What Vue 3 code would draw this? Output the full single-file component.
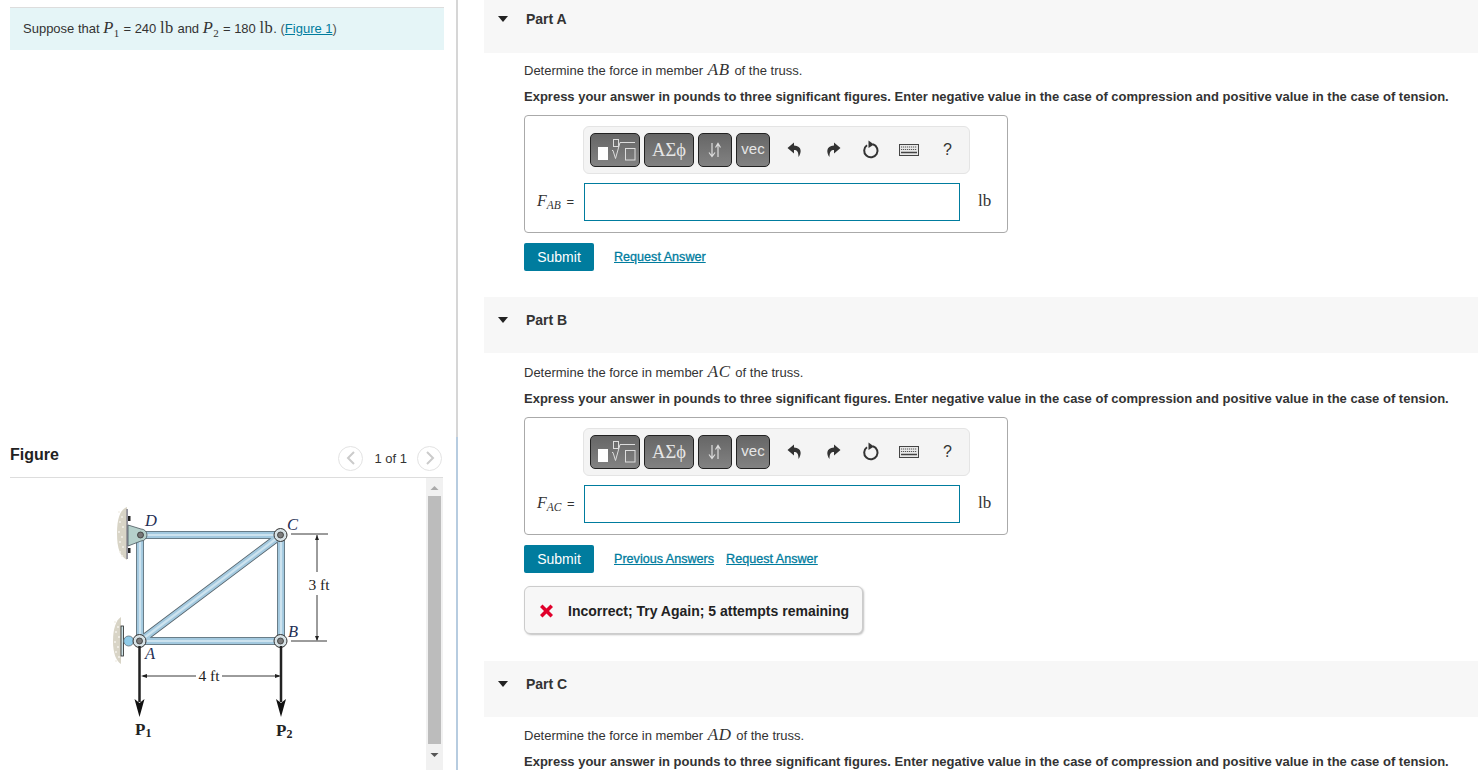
<script setup>
const parts = [
  { id: 'A', cls: 'part-a', member: 'AB', sub: 'AB', links: ['Request Answer'], incorrect: false, open: true },
  { id: 'B', cls: 'part-b', member: 'AC', sub: 'AC', links: ['Previous Answers', 'Request Answer'], incorrect: true, open: true },
  { id: 'C', cls: 'part-c', member: 'AD', sub: 'AD', links: [], incorrect: false, open: false },
]
const wallDots = [
  [119,512],[122,517],[120,522],[123,527],[119,532],[122,537],[120,542],[123,547],[120,552],[122,556],
]
const wallDots2 = [
  [115,622],[118,627],[116,632],[119,637],[115,642],[118,647],[116,652],[119,657],[116,661],
]
const joints = [[280.5,535],[280.5,641],[139.5,641]]
const bars = 'M140 535V641M141 535H281M281 535V641M140 641H281M140 641 281 535'
</script>

<template>
  <div class="page">
    <div class="left">
      <div class="left-top">
        <div class="banner">
          Suppose that <span class="math"><i>P</i><sub>1</sub></span> = 240 <span class="math">lb</span> and
          <span class="math"><i>P</i><sub>2</sub></span> = 180 <span class="math">lb</span>.
          <span class="figlink">(<a>Figure 1</a>)</span>
        </div>
      </div>
      <div class="left-bottom">
        <div class="fig-head">
          <h2>Figure</h2>
          <div class="pager">
            <span class="circle">
              <svg width="10" height="14" viewBox="0 0 10 14"><path d="M8 1 2 7l6 6" fill="none" stroke="#cbcbcb" stroke-width="2"/></svg>
            </span>
            <span class="count">1 of 1</span>
            <span class="circle">
              <svg width="10" height="14" viewBox="0 0 10 14"><path d="m2 1 6 6-6 6" fill="none" stroke="#cbcbcb" stroke-width="2"/></svg>
            </span>
          </div>
        </div>
        <div class="fig-body">
          <svg class="truss" width="416" height="292" viewBox="10 478 416 292">
            <path d="M127 507c-6 2-10 10-10 26s3 23 10 27z" fill="#d8d4c6"/>
            <circle v-for="d in wallDots" :key="d[1]" :cx="d[0]" :cy="d[1]" r="1" fill="#f3f1ea"/>
            <path d="M121 617c-5 3-8 12-8 24s3 20 8 23z" fill="#d8d4c6"/>
            <circle v-for="d in wallDots2" :key="d[1]" :cx="d[0]" :cy="d[1]" r="1" fill="#f3f1ea"/>
            <rect x="126.500" y="509" width="1.200" height="50" fill="#667"/>
            <rect x="128" y="516" width="2.500" height="5" fill="#222"/>
            <rect x="128" y="548" width="2.500" height="5" fill="#222"/>
            <rect x="121" y="626" width="2.500" height="30" fill="#cfe4e8" stroke="#222" stroke-width="0.8"/>
            <g fill="none">
              <path :d="bars" stroke="#56636b" stroke-width="8"/>
              <path :d="bars" stroke="#a3c9df" stroke-width="6.500"/>
              <path :d="bars" stroke="#cde3ef" stroke-width="2.200"/>
            </g>
            <path d="M128 525 141 529a6 6 0 0 1 0 12L128 546z" fill="#b5d0cb" stroke="#47545c" stroke-width="0.8"/>
            <circle cx="140.500" cy="535" r="3" fill="#777" stroke="#333" stroke-width="0.8"/>
            <circle cx="128.700" cy="641" r="5" fill="#8fcbe8" stroke="#5f6d75" stroke-width="0.8"/>
            <g v-for="j in joints" :key="j[0] + '-' + j[1]">
              <circle :cx="j[0]" :cy="j[1]" r="6.500" fill="#d7e2e6" stroke="#333" stroke-width="1"/>
              <circle :cx="j[0]" :cy="j[1]" r="3" fill="#7c7c7c" stroke="#333" stroke-width="0.8"/>
            </g>
            <path d="M139.500 646V702M281 646V702" stroke="#222" stroke-width="2.500"/>
            <path d="M134.500 699 139.500 703 144.500 699 139.500 717zM276 699 281 703 286 699 281 717z" fill="#111"/>
            <g stroke="#222" stroke-width="0.9" fill="none">
              <path d="M291 534H328M291 641H327M317 535V572M317 595V640M143 676H196M222 676H279"/>
            </g>
            <path d="M317 535l-2 5h4zM317 641l-2-5h4zM141 676l6-2v4zM281 676l-6-2v4z" fill="#222"/>
            <g class="dim">
              <text x="319" y="590" text-anchor="middle">3 ft</text>
              <text x="209" y="681" text-anchor="middle">4 ft</text>
            </g>
            <g class="jl">
              <text x="145" y="526">D</text>
              <text x="287" y="530">C</text>
              <text x="288" y="637">B</text>
              <text x="145" y="659">A</text>
            </g>
            <g class="pl">
              <text x="135" y="735">P<tspan class="ps" dy="2">1</tspan></text>
              <text x="276" y="736">P<tspan class="ps" dy="2">2</tspan></text>
            </g>
          </svg>
          <div class="scrollbar">
            <svg width="13" height="18" viewBox="0 0 13 18"><path d="m2.500 12 4-4 4 4z" fill="#aaa"/></svg>
            <div class="thumb"></div>
            <svg width="13" height="26" viewBox="0 0 13 26"><path d="m2.500 9 4 4 4-4z" fill="#555"/></svg>
          </div>
        </div>
      </div>
    </div>

    <div class="right">
      <section v-for="p in parts" :key="p.id" :class="p.cls">
        <header class="part-head">
          <svg class="caret" width="10" height="6" viewBox="0 0 10 6"><path d="M0 0h10L5 6z" fill="#222"/></svg>
          <span>Part {{ p.id }}</span>
        </header>
        <div class="part-body">
          <p class="q">Determine the force in member <i class="math big">{{ p.member }}</i> of the truss.</p>
          <p class="ins">Express your answer in pounds to three significant figures. Enter negative value in the case of compression and positive value in the case of tension.</p>
          <template v-if="p.open">
            <div class="answer">
              <div class="toolbar">
                <button class="tb w50">
                  <svg width="44" height="26" viewBox="0 0 44 26">
                    <rect x="5" y="10" width="10" height="13" fill="#fff"/>
                    <rect x="20.500" y="2.500" width="5" height="7" fill="none" stroke="#ddd" stroke-width="1"/>
                    <path d="M19 13.500h1l2.500 8L27 5.500H42" fill="none" stroke="#ddd" stroke-width="1"/>
                    <rect x="32.500" y="11.500" width="9.500" height="11.500" fill="none" stroke="#ddd" stroke-width="1"/>
                  </svg>
                </button>
                <button class="tb w50 greek">ΑΣϕ</button>
                <button class="tb w34">
                  <svg width="16" height="18" viewBox="0 0 16 18">
                    <path d="M5 2v13M2 11.500 5 15.500 8 11.500M11 16V3M8.500 6.500 11 2.500 13.500 6.500" fill="none" stroke="#ddd" stroke-width="1.200"/>
                  </svg>
                </button>
                <button class="tb w34 vec">vec</button>
                <span class="tool t1">
                  <svg width="16" height="16" viewBox="0 0 16 16"><path d="M7 .5.500 6 7 11.500V8c3 0 4.500 1.500 4.500 7 3-4 4-11-4.500-11.500z" fill="#333"/></svg>
                </span>
                <span class="tool t2">
                  <svg width="16" height="16" viewBox="0 0 16 16"><path d="M9 .5 15.500 6 9 11.500V8c-3 0-4.500 1.500-4.500 7C1.500 11 .5 4 9 3.500z" fill="#333"/></svg>
                </span>
                <span class="tool t3">
                  <svg width="18" height="20" viewBox="0 0 18 20">
                    <path d="M11 4.300A6.700 6.700 0 1 1 5 5.200" fill="none" stroke="#333" stroke-width="2"/>
                    <path d="M6.500 0.500 12 4.500 6.500 8z" fill="#333"/>
                  </svg>
                </span>
                <span class="tool t4">
                  <svg width="20" height="12" viewBox="0 0 20 12">
                    <rect x="0.500" y="0.500" width="19" height="11" fill="#e8e8e8" stroke="#444"/>
                    <path d="M2 3h16M2 5.500h16" stroke="#555" stroke-width="1.200" stroke-dasharray="1.200 .8"/>
                    <path d="M2 8.500h16" stroke="#444" stroke-width="1.500"/>
                  </svg>
                </span>
                <span class="tool help">?</span>
              </div>
              <div class="answer-row">
                <label class="lab"><i class="f">F</i><i class="sub">{{ p.sub }}</i> =</label>
                <input class="inp" type="text" />
                <span class="unit">lb</span>
              </div>
            </div>
            <div class="actions">
              <button class="submit">Submit</button>
              <a v-for="l in p.links" :key="l" class="link">{{ l }}</a>
            </div>
            <div v-if="p.incorrect" class="feedback">
              <svg width="15" height="14" viewBox="0 0 15 14"><path d="M1 3 3.500.5 7.500 4.500 11.500.5 14 3 10 7l4 4-2.500 2.500-4-4-4 4L1 11l4-4z" fill="#e0002b"/></svg>
              <span>Incorrect; Try Again; 5 attempts remaining</span>
            </div>
          </template>
        </div>
      </section>
    </div>
  </div>
</template>

<style>
html, body { margin: 0; overflow: hidden; background: #fff; }
</style>

<style scoped>
.page {
  display: flex;
  height: 770px;
  overflow: hidden;
  font-family: "Liberation Sans", Arial, sans-serif;
  color: #333;
  font-size: 13px;
}
.left { width: 458px; flex: none; margin-right: 26px; display: flex; flex-direction: column; }
.left-top { height: 437px; box-sizing: border-box; padding: 7px 0 0 10px; border-right: 2px solid #d6d6d6; }
.banner {
  width: 434px;
  height: 43px;
  box-sizing: border-box;
  border-top: 1px solid #ddd;
  background: #e5f5f7;
  padding-left: 13px;
  line-height: 40px;
  white-space: nowrap;
  font-size: 13px;
}
.math { font-family: "Liberation Serif", "Times New Roman", serif; font-size: 16.500px; letter-spacing: .5px; }
.math sub { font-size: 11px; line-height: 0; }
.figlink a { color: #007c9e; text-decoration: underline; }
.figlink { color: #555; }
.left-bottom { flex: 1; min-height: 0; border-right: 2px solid #b7cce0; padding-left: 10px; }
.fig-head {
  width: 433px;
  height: 41px;
  box-sizing: border-box;
  border-bottom: 1px solid #ddd;
  display: flex;
  align-items: center;
  justify-content: space-between;
  padding: 0 1px 5px 0;
}
.fig-head h2 { margin: 0; font-size: 16px; font-weight: 700; color: #222; }
.pager { display: flex; align-items: center; padding-top: 7px; }
.circle {
  width: 23px;
  height: 23px;
  border: 1px solid #e3e3e3;
  border-radius: 50%;
  display: flex;
  align-items: center;
  justify-content: center;
}
.count { margin: 0 10px 0 11px; font-size: 13px; color: #333; }
.fig-body { display: flex; height: 292px; }
.truss { display: block; width: 416px; flex: none; }
.truss .dim text { font: 15.500px "Liberation Serif", serif; fill: #222; }
.truss .jl text { font: italic 16.500px "Liberation Serif", serif; fill: #1f2f55; }
.truss .pl text { font: 700 17px "Liberation Serif", serif; fill: #222; }
.truss .pl .ps { font-size: 12px; }
.scrollbar {
  width: 17px;
  flex: none;
  background: #f1f1f1;
  display: flex;
  flex-direction: column;
  align-items: center;
}
.thumb { width: 13px; flex: 1; background: #bcbcbc; }

.right { flex: 1; min-width: 0; }
.part-head {
  background: #f7f7f7;
  display: flex;
  align-items: center;
  font-weight: 700;
  font-size: 14px;
  color: #333;
}
.caret { margin: 0 18px 0 14px; }
.part-a .part-head { height: 53px; padding-bottom: 15px; box-sizing: border-box; }
.part-b .part-head, .part-c .part-head { height: 56px; padding-bottom: 10px; box-sizing: border-box; }
.part-body { padding-left: 40px; }
.part-a .part-body { padding-top: 8px; padding-bottom: 26px; }
.part-b .part-body { padding-top: 10px; padding-bottom: 27px; }
.part-c .part-body { padding-top: 9px; }
.q, .ins { margin: 0; line-height: 18px; white-space: nowrap; }
.q { font-size: 13px; }
.big { font-size: 17px; margin-left: 1px; letter-spacing: .6px; margin-right: 1px; }
.ins { font-weight: 700; margin-top: 8px; font-size: 13px; }
.answer {
  width: 484px;
  box-sizing: border-box;
  height: 118px;
  margin-top: 9px;
  border: 1px solid #aaa;
  border-radius: 4px;
  padding: 10px 0 0 58px;
}
.toolbar {
  width: 387px;
  height: 48px;
  box-sizing: border-box;
  background: #f4f4f4;
  border: 1px solid #e4e4e4;
  border-radius: 6px;
  display: flex;
  align-items: center;
  padding-left: 6px;
  gap: 4px;
}
.tb {
  height: 34px;
  padding: 0;
  box-sizing: border-box;
  border: 1px solid #222;
  border-radius: 5px;
  background: linear-gradient(#666, #828282);
  color: #eee;
  display: flex;
  align-items: center;
  justify-content: center;
}
.w50 { width: 50px; }
.w34 { width: 34px; }
.greek { font: 18.500px "Liberation Serif", serif; color: #e6e6e6; }
.vec { font: 15px "Liberation Sans", sans-serif; color: #e6e6e6; padding-bottom: 3px; }
.tool { display: flex; align-items: center; justify-content: center; }
.t1 { margin-left: 13px; }
.t2 { margin-left: 18px; }
.t3 { margin-left: 17px; }
.t4 { margin-left: 15px; }
.help { margin-left: 20px; font-size: 16px; color: #333; }
.answer-row { display: flex; align-items: center; margin: 9px 0 0 -58px; }
.lab {
  width: 59px;
  box-sizing: border-box;
  padding: 0 0 3px 12px;
  white-space: nowrap;
  font-size: 13px;
}
.f { font: italic 16px "Liberation Serif", serif; }
.sub { font: italic 11.500px "Liberation Serif", serif; position: relative; top: 3px; margin-right: 2px; }
.inp {
  width: 376px;
  height: 38px;
  box-sizing: border-box;
  border: 1px solid #007c9e;
  background: #fff;
  outline: none;
  padding: 0;
}
.unit { margin-left: 18px; padding-bottom: 3px; font: 17px "Liberation Serif", serif; color: #333; }
.actions { display: flex; align-items: center; margin-top: 10px; gap: 12px; }
.submit {
  width: 70px;
  height: 28px;
  margin-right: 8px;
  border: 0;
  border-radius: 2px;
  background: #007c9e;
  color: #fff;
  font: 14px "Liberation Sans", sans-serif;
  padding: 0;
}
.link { color: #007c9e; text-decoration: underline; font-size: 12.600px; -webkit-text-stroke: .3px #007c9e; position: relative; top: 1px; padding-bottom: 2px; }
.feedback {
  width: 339px;
  height: 48px;
  box-sizing: border-box;
  margin-top: 13px;
  border: 1px solid #ccc;
  border-radius: 6px;
  background: #f7f7f7;
  box-shadow: 1px 1px 2px rgba(0,0,0,.25);
  display: flex;
  align-items: center;
  padding: 2px 0 0 14px;
  gap: 14px;
  font-weight: 700;
  font-size: 14px;
  color: #222;
  white-space: nowrap;
}
</style>
